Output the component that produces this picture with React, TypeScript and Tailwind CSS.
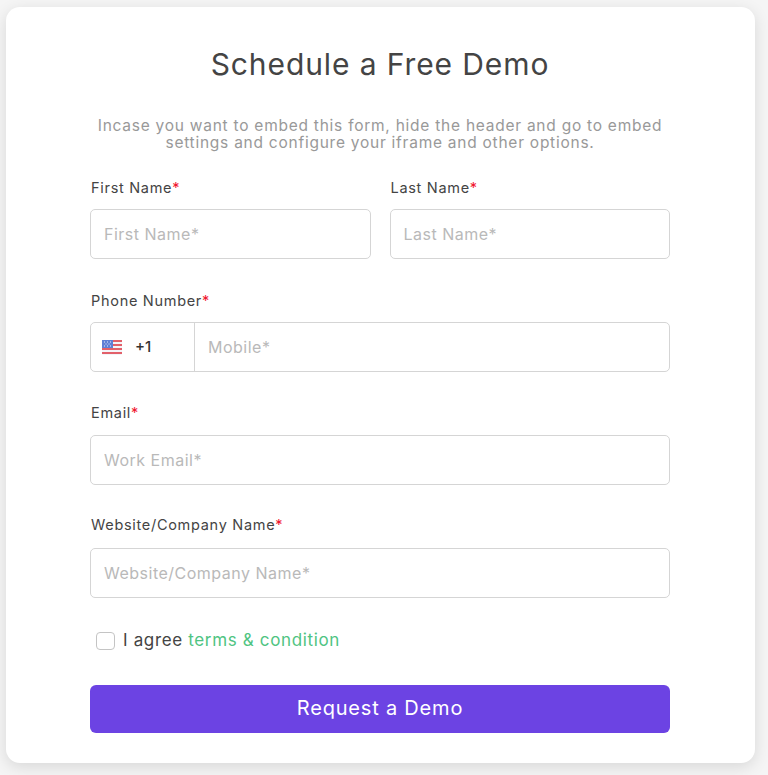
import React from "react";

const inputClass =
  "block w-full h-[50px] px-[13px] text-[16px] tracking-[0.5px] text-[#333] bg-white border border-[#d5d5d5] rounded-[5px] outline-none placeholder:text-[#b9b9b9]";

function Label(props: { text: string; className?: string }) {
  return (
    <label
      className={
        "block h-[22px] ml-[1px] text-[14.5px] tracking-[0.7px] leading-[22px] text-[#444] " +
        (props.className || "mb-[10px]")
      }
    >
      {props.text}
      <span className="text-[#f0142f]">*</span>
    </label>
  );
}

function UsFlag() {
  return (
    <svg width="20" height="15" viewBox="0 0 20 15" className="shrink-0">
      <rect width="20" height="15" rx="1" fill="#f4f4f8" />
      <rect y="0" width="20" height="2" fill="#e2606a" />
      <rect y="4" width="20" height="2" fill="#e2606a" />
      <rect y="8" width="20" height="2" fill="#e2606a" />
      <rect y="12" width="20" height="2" fill="#e2606a" />
      <rect width="11" height="8" fill="#5f7fd6" />
      <path d="M2 2h1M5 2h1M8 2h1M3.5 4h1M6.5 4h1M2 6h1M5 6h1M8 6h1" stroke="#e6ebfa" strokeWidth="1" />
    </svg>
  );
}

export default function App() {
  return (
    <div className="min-h-[775px] bg-[#f5f5f5] pt-[7px] pl-[6px] pr-[13px] font-['Inter',sans-serif]">
      <form className="h-[756px] bg-white rounded-[14px] shadow-[0_4px_16px_rgba(0,0,0,0.12)] pt-[39px] pl-[84px] pr-[85px]">
        <h1 className="text-center text-[30px] leading-[36px] text-[#444] tracking-[0.9px]">Schedule a Free Demo</h1>
        <p className="mt-[35px] text-center text-[15.5px] leading-[17px] tracking-[0.75px] text-[#999]">
          Incase you want to embed this form, hide the header and go to embed
          <br />
          settings and configure your iframe and other options.
        </p>

        <div className="mt-[26px] grid grid-cols-2 gap-x-[19px]">
          <div>
            <Label text="First Name" />
            <input className={inputClass} placeholder="First Name*" />
          </div>
          <div>
            <Label text="Last Name" />
            <input className={inputClass} placeholder="Last Name*" />
          </div>
        </div>

        <div className="mt-[31px]">
          <Label text="Phone Number" />
          <div className="flex h-[50px] border border-[#d5d5d5] rounded-[5px] overflow-hidden">
            <div className="flex items-center gap-[13px] w-[104px] pl-[11px] border-r border-[#d5d5d5]">
              <UsFlag />
              <span className="text-[15px] font-medium text-[#333]">+1</span>
            </div>
            <input
              className="flex-1 min-w-0 px-[13px] text-[16px] tracking-[0.5px] outline-none placeholder:text-[#b9b9b9]"
              placeholder="Mobile*"
            />
          </div>
        </div>

        <div className="mt-[30px]">
          <Label text="Email" className="mb-[11px]" />
          <input className={inputClass} placeholder="Work Email*" />
        </div>

        <div className="mt-[29px]">
          <Label text="Website/Company Name" className="mb-[12px]" />
          <input className={inputClass} placeholder="Website/Company Name*" />
        </div>

        <div className="mt-[32px] ml-[6px] flex items-center gap-[8px] h-[22px]">
          <span className="block w-[19px] h-[18px] bg-white border border-[#c4c4c4] rounded-[4px]" />
          <span className="text-[17px] tracking-[0.65px] text-[#444]">
            I agree <span className="text-[#4fc482]">terms &amp; condition</span>
          </span>
        </div>

        <button
          type="button"
          className="mt-[33px] block w-full h-[48px] pb-[3px] bg-[#6c43e3] text-white text-[20px] tracking-[0.8px] rounded-[6px]"
        >
          Request a Demo
        </button>
      </form>
    </div>
  );
}
